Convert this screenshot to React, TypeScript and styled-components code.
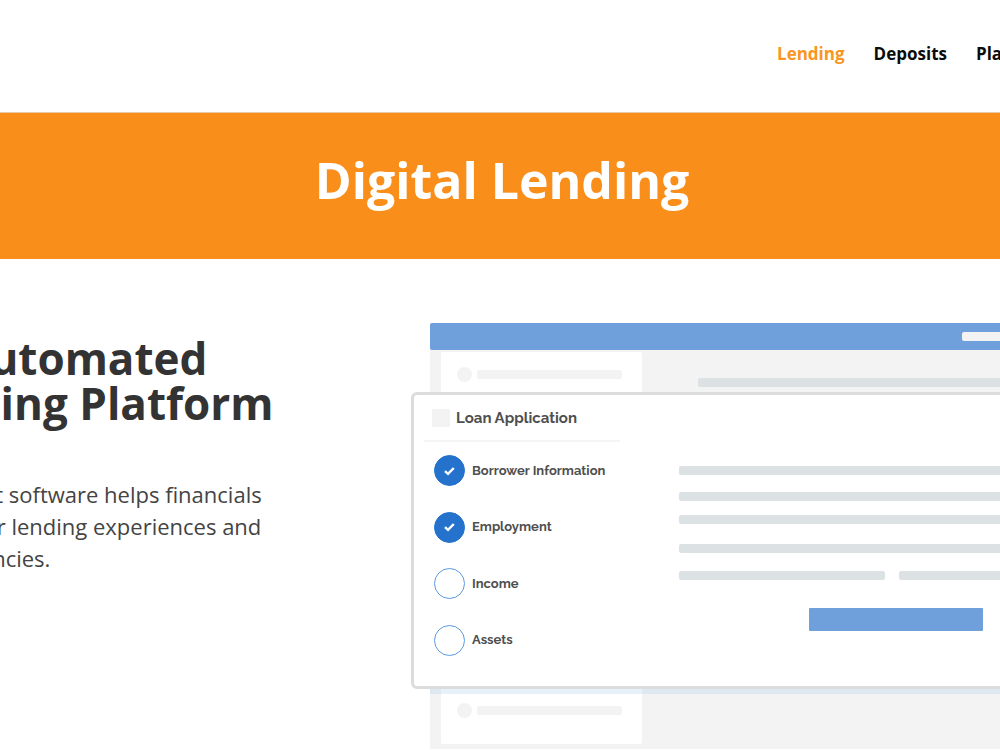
import React from "react";
import styled, { createGlobalStyle } from "styled-components";

const GlobalStyle = createGlobalStyle`
  *, *::before, *::after { box-sizing: border-box; }
  body {
    margin: 0;
    background: #fff;
    color: #333;
    font-family: "Open Sans", "Noto Sans", sans-serif;
    overflow: hidden;
  }
  h1, h2, p, ul, ol, figure { margin: 0; padding: 0; }
  ul, ol { list-style: none; }
`;

const Page = styled.div`
  overflow: hidden;
`;

const Header = styled.header`
  display: flex;
  justify-content: flex-end;
  align-items: center;
  height: 113px;
  padding-bottom: 5px;
  border-bottom: 1px solid #e6cba8;
`;

const NavList = styled.ul`
  display: flex;
  gap: 29px;
  margin-right: -51px;
`;

const NavLink = styled.a<{ $active?: boolean }>`
  color: ${(p) => (p.$active ? "#f99621" : "#0c0c0c")};
  font-size: 17px;
  font-weight: 700;
  line-height: 24px;
  text-decoration: none;
`;

const Banner = styled.section`
  padding: 42px 0 54px 4px;
  background: #f98e1a;
  text-align: center;
`;

const BannerTitle = styled.h1`
  color: #fff;
  font-size: 50px;
  font-weight: 700;
  line-height: 50px;
`;

const Intro = styled.section`
  display: flex;
  align-items: flex-start;
  padding-top: 64px;
`;

const Copy = styled.div`
  flex: 0 0 518px;
  margin-left: -107px;
  padding-top: 13px;
`;

const CopyTitle = styled.h2`
  width: fit-content;
  font-size: 44px;
  font-weight: 700;
  line-height: 45px;
  text-align: center;
  white-space: nowrap;
`;

const CopyText = styled.p`
  margin-top: 52px;
  padding-left: 38px;
  color: #444;
  font-size: 22px;
  line-height: 32px;
  white-space: nowrap;
`;

const Mockup = styled.figure`
  position: relative;
  flex: 1;
  margin-right: -140px;
  padding: 0 20px 0 19px;
`;

const Screen = styled.div`
  background: #f3f3f3;
`;

const ScreenBar = styled.div`
  display: flex;
  justify-content: flex-end;
  align-items: center;
  height: 27px;
  padding-right: 28px;
  border-radius: 2px;
  background: #6fa0dc;
`;

const ScreenBody = styled.div`
  display: flex;
  align-items: flex-start;
  gap: 56px;
  padding: 2px 28px 5px 11px;
`;

const Sidebar = styled.div`
  display: flex;
  flex-direction: column;
  justify-content: space-between;
  width: 201px;
  height: 392px;
  padding: 15px 20px 26px 16px;
  border-radius: 2px;
  background: #fff;
`;

const SidebarRow = styled.div`
  display: flex;
  align-items: center;
  gap: 5px;
`;

const Dot = styled.span`
  width: 15px;
  height: 15px;
  border-radius: 50%;
  background: #f3f3f3;
`;

const Bar = styled.div<{ $width?: number; $light?: boolean }>`
  flex: ${(p) => (p.$width ? `0 0 ${p.$width}px` : "1")};
  height: 9px;
  border-radius: 2px;
  background: ${(p) => (p.$light ? "#f3f3f3" : "#dce1e4")};
`;

const ScreenContent = styled.div`
  display: flex;
  flex: 1;
  padding-top: 26px;
`;

const Card = styled.div`
  position: absolute;
  top: 69px;
  left: 0;
  right: 0;
  display: flex;
  height: 297px;
  padding-right: 25px;
  border: 3px solid #dcdcdc;
  border-radius: 6px;
  background: #fff;

  &::after {
    content: "";
    position: absolute;
    top: 294px;
    left: 16px;
    right: 16px;
    height: 5px;
    background: rgba(175, 210, 240, 0.3);
  }
`;

const Steps = styled.div`
  flex: 0 0 196px;
  margin: 0 59px 0 10px;
`;

const StepsHeader = styled.div`
  display: flex;
  align-items: center;
  gap: 6px;
  height: 47px;
  padding-left: 8px;
  border-bottom: 2px solid #f5f5f5;
  color: #4f4f4f;
  font-family: Raleway, Lato, sans-serif;
  font-size: 15px;
  font-weight: 700;
  line-height: 20px;
`;

const Square = styled.span`
  width: 18px;
  height: 18px;
  background: #f3f3f3;
`;

const StepList = styled.ol`
  display: flex;
  flex-direction: column;
  justify-content: space-between;
  height: 201px;
  margin-top: 13px;
`;

const Step = styled.li`
  display: flex;
  align-items: center;
  gap: 7px;
  padding-left: 10px;
  color: #4f4f4f;
  font-family: Raleway, Lato, sans-serif;
  font-size: 13px;
  font-weight: 700;
  line-height: 18px;
  white-space: nowrap;
`;

const StepMark = styled.span<{ $done: boolean }>`
  display: grid;
  place-items: center;
  width: 31px;
  height: 31px;
  border: 1px solid ${(p) => (p.$done ? "#2472cc" : "#5c9ade")};
  border-radius: 50%;
  background: ${(p) => (p.$done ? "#2472cc" : "#fff")};
`;

const Form = styled.div`
  flex: 1;
  padding-top: 71px;
`;

const FormRow = styled.div<{ $gap: number }>`
  display: flex;
  gap: 14px;
  margin-bottom: ${(p) => p.$gap}px;
`;

const Submit = styled.div`
  width: 174px;
  height: 23px;
  margin: 0 auto;
  border-radius: 1px;
  background: #6fa0dc;
`;

const steps = [
  { label: "Borrower Information", done: true },
  { label: "Employment", done: true },
  { label: "Income", done: false },
  { label: "Assets", done: false },
];

const Check = () => (
  <svg width="12" height="10" viewBox="0 0 12 10" aria-hidden="true">
    <path d="M1 5.2 4 7.8 9.8 2" fill="none" stroke="#fff" strokeWidth="2.4" />
  </svg>
);

export default function App() {
  return (
    <Page>
      <GlobalStyle />
      <Header>
        <nav>
          <NavList>
            <li><NavLink href="#lending" $active>Lending</NavLink></li>
            <li><NavLink href="#deposits">Deposits</NavLink></li>
            <li><NavLink href="#platform">Platform</NavLink></li>
          </NavList>
        </nav>
      </Header>
      <main>
        <Banner>
          <BannerTitle>Digital Lending</BannerTitle>
        </Banner>
        <Intro>
          <Copy>
            <CopyTitle>Automated<br />Lending Platform</CopyTitle>
            <CopyText>
              Robust software helps financials<br />
              greater lending experiences and<br />
              efficiencies.
            </CopyText>
          </Copy>
          <Mockup>
            <Screen>
              <ScreenBar><Bar $width={130} $light /></ScreenBar>
              <ScreenBody>
                <Sidebar>
                  <SidebarRow><Dot /><Bar $light /></SidebarRow>
                  <SidebarRow><Dot /><Bar $light /></SidebarRow>
                </Sidebar>
                <ScreenContent><Bar /></ScreenContent>
              </ScreenBody>
            </Screen>
            <Card>
              <Steps>
                <StepsHeader><Square />Loan Application</StepsHeader>
                <StepList>
                  {steps.map((s) => (
                    <Step key={s.label}>
                      <StepMark $done={s.done}>{s.done && <Check />}</StepMark>
                      {s.label}
                    </Step>
                  ))}
                </StepList>
              </Steps>
              <Form>
                <FormRow $gap={17}><Bar /></FormRow>
                <FormRow $gap={14}><Bar /></FormRow>
                <FormRow $gap={20}><Bar /></FormRow>
                <FormRow $gap={18}><Bar /></FormRow>
                <FormRow $gap={28}><Bar $width={206} /><Bar /></FormRow>
                <Submit />
              </Form>
            </Card>
          </Mockup>
        </Intro>
      </main>
    </Page>
  );
}
